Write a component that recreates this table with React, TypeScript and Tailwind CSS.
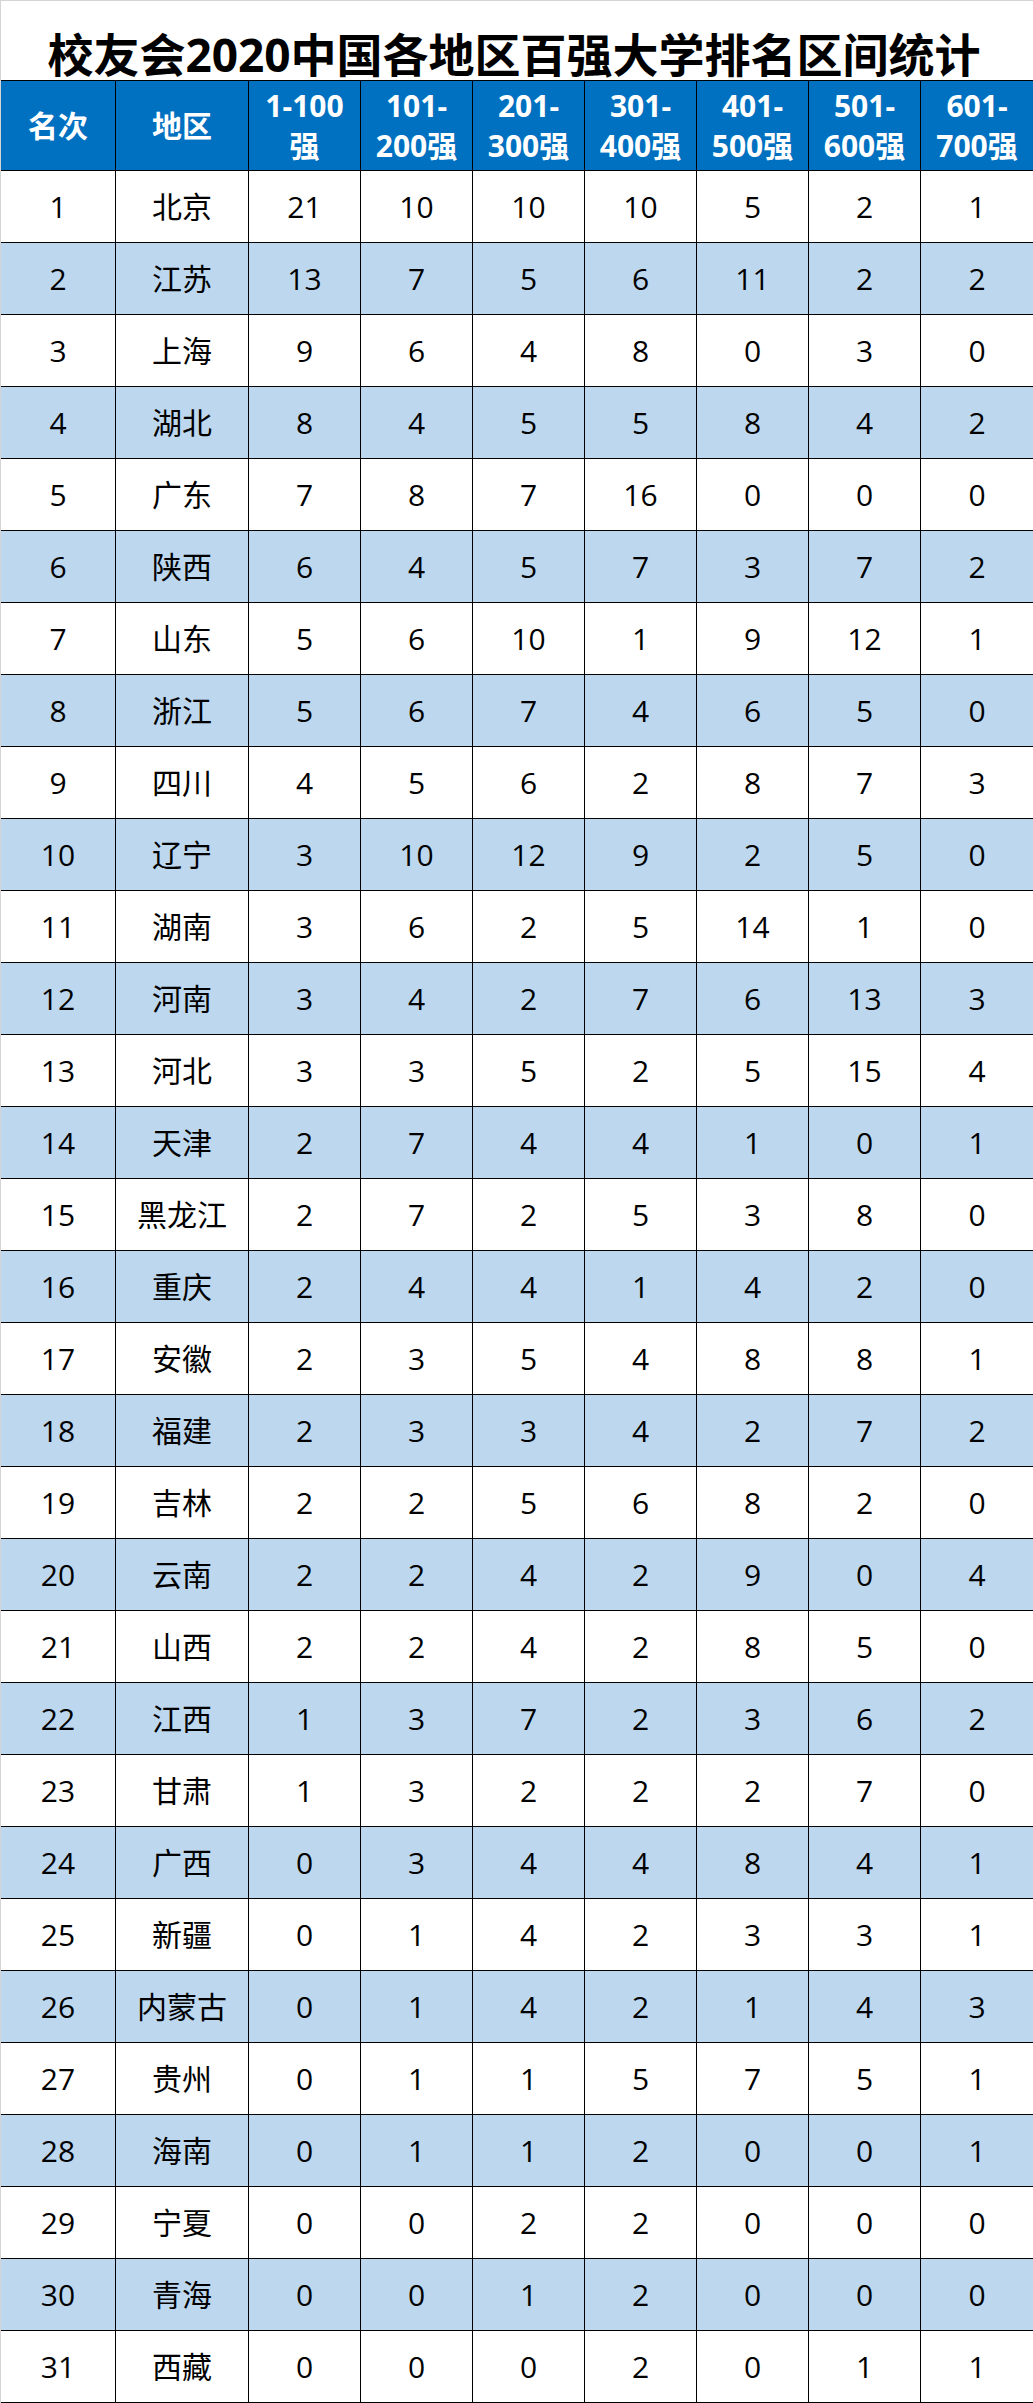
const headers = ["名次", "地区", "1-100\n强", "101-\n200强", "201-\n300强", "301-\n400强", "401-\n500强", "501-\n600强", "601-\n700强"];

const rows: [string, number[]][] = [
  ["北京", [21, 10, 10, 10, 5, 2, 1]],
  ["江苏", [13, 7, 5, 6, 11, 2, 2]],
  ["上海", [9, 6, 4, 8, 0, 3, 0]],
  ["湖北", [8, 4, 5, 5, 8, 4, 2]],
  ["广东", [7, 8, 7, 16, 0, 0, 0]],
  ["陕西", [6, 4, 5, 7, 3, 7, 2]],
  ["山东", [5, 6, 10, 1, 9, 12, 1]],
  ["浙江", [5, 6, 7, 4, 6, 5, 0]],
  ["四川", [4, 5, 6, 2, 8, 7, 3]],
  ["辽宁", [3, 10, 12, 9, 2, 5, 0]],
  ["湖南", [3, 6, 2, 5, 14, 1, 0]],
  ["河南", [3, 4, 2, 7, 6, 13, 3]],
  ["河北", [3, 3, 5, 2, 5, 15, 4]],
  ["天津", [2, 7, 4, 4, 1, 0, 1]],
  ["黑龙江", [2, 7, 2, 5, 3, 8, 0]],
  ["重庆", [2, 4, 4, 1, 4, 2, 0]],
  ["安徽", [2, 3, 5, 4, 8, 8, 1]],
  ["福建", [2, 3, 3, 4, 2, 7, 2]],
  ["吉林", [2, 2, 5, 6, 8, 2, 0]],
  ["云南", [2, 2, 4, 2, 9, 0, 4]],
  ["山西", [2, 2, 4, 2, 8, 5, 0]],
  ["江西", [1, 3, 7, 2, 3, 6, 2]],
  ["甘肃", [1, 3, 2, 2, 2, 7, 0]],
  ["广西", [0, 3, 4, 4, 8, 4, 1]],
  ["新疆", [0, 1, 4, 2, 3, 3, 1]],
  ["内蒙古", [0, 1, 4, 2, 1, 4, 3]],
  ["贵州", [0, 1, 1, 5, 7, 5, 1]],
  ["海南", [0, 1, 1, 2, 0, 0, 1]],
  ["宁夏", [0, 0, 2, 2, 0, 0, 0]],
  ["青海", [0, 0, 1, 2, 0, 0, 0]],
  ["西藏", [0, 0, 0, 2, 0, 1, 1]],
];

const grid = "grid grid-cols-[115px_133px_112px_112px_112px_112px_112px_112px_112px]";

export default function App() {
  return (
    <div
      className="w-[1033px] border-l border-t border-[#d4d4d4] bg-white text-black"
      style={{ fontFamily: '"Open Sans", "Noto Sans CJK SC", sans-serif' }}
    >
      {/* Title */}
      <div className="flex h-[79px] items-end justify-center pb-[3px] pr-[6px]">
        <h1 className="text-[46px] font-bold leading-none">校友会2020中国各地区百强大学排名区间统计</h1>
      </div>

      {/* Header */}
      <div className={`${grid} border-t border-b border-black bg-[#0070c0] text-white`}>
        {headers.map((h, i) => (
          <div
            key={i}
            className={`flex h-[89px] flex-col items-center justify-center whitespace-pre text-center text-[30px] font-bold leading-[40px] ${
              i < headers.length - 1 ? "border-r border-black" : ""
            }`}
          >
            {h}
          </div>
        ))}
      </div>

      {/* Rows */}
      {rows.map(([region, nums], r) => (
        <div key={region} className={`${grid} border-b border-black ${r % 2 === 1 ? "bg-[#bdd7ee]" : "bg-white"}`}>
          {[String(r + 1), region, ...nums.map(String)].map((v, i) => (
            <div
              key={i}
              className={`flex h-[71px] items-center justify-center text-[30px] leading-none ${
                i < 8 ? "border-r border-black" : ""
              }`}
            >
              {v}
            </div>
          ))}
        </div>
      ))}
    </div>
  );
}
